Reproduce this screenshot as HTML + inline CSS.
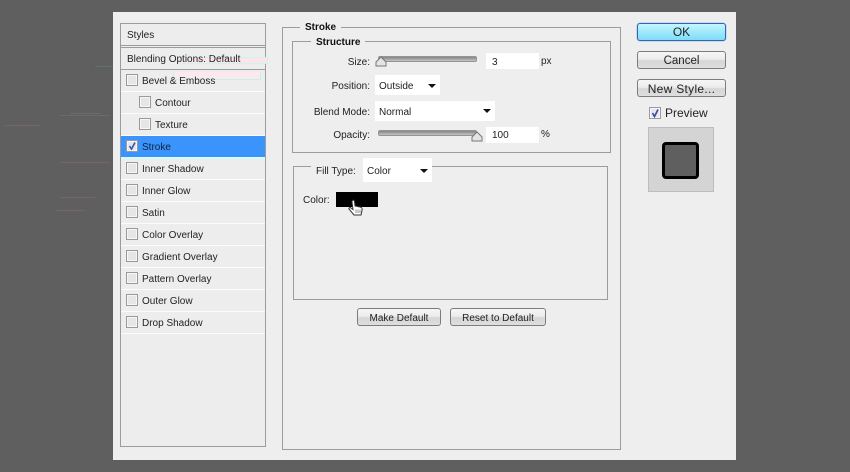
<!DOCTYPE html>
<html><head><meta charset="utf-8"><style>
html,body{margin:0;padding:0}
body{width:850px;height:472px;overflow:hidden;background:#5f5f5f;position:relative;font-family:"Liberation Sans",sans-serif;font-size:10px;color:#222}
div{position:absolute;box-sizing:border-box}
.t{white-space:nowrap;line-height:14px;height:14px;margin-top:1px}
.r{text-align:right}
.b{font-weight:bold;color:#111;background:#eee;padding:0 5px}
.g{border:1px solid #9c9c9c}
.sep{left:121px;width:144px;height:1px;background:#fcfcfc}
.cb{width:12px;height:12px;border:1px solid #9a9a9a;background:#e6e6e6;box-shadow:inset 0 0 0 1px #f6f6f6}
.inp{background:#fff;height:18px;padding-left:4px;white-space:nowrap}
.arr{width:0;height:0;border-left:4px solid transparent;border-right:4px solid transparent;border-top:4px solid #111}
.btn{border:1px solid #7c7c7c;border-radius:3px;background:linear-gradient(#f6f6f6 0,#ececec 45%,#d6d6d6 55%,#dedede 100%);text-align:center;white-space:nowrap}
.track{height:6px;border-radius:2px;background:linear-gradient(#848484,#c4c4c4);border:1px solid #959595}
.p{height:1px;background:#a8707f;opacity:.3}
.c{height:1px;background:#5f9c8c;opacity:.3}
</style></head><body>
<!-- faint artefacts on backdrop -->
<div class="p" style="left:5px;top:125px;width:35px"></div>
<div class="p" style="left:60px;top:115px;width:50px"></div>
<div class="c" style="left:70px;top:113px;width:30px"></div>
<div class="p" style="left:60px;top:162px;width:50px"></div>
<div class="p" style="left:60px;top:197px;width:35px"></div>
<div class="p" style="left:55px;top:210px;width:30px"></div>
<div class="c" style="left:95px;top:66px;width:18px"></div>

<div style="left:113px;top:12px;width:623px;height:448px;background:#eee"></div>

<!-- left panel -->
<div class="g" style="left:120px;top:23px;width:146px;height:424px;background:#ededed"></div>
<div style="left:121px;top:45px;width:144px;height:1px;background:#9c9c9c"></div>
<div style="left:121px;top:47px;width:144px;height:1px;background:#9c9c9c"></div>
<div style="left:121px;top:69px;width:144px;height:1px;background:#9c9c9c"></div>
<div class="t" style="left:127px;top:28px">Styles</div>
<div style="left:182px;top:57px;width:86px;height:7px;background:#fde4ea;border:1px solid #c9f5ee;border-left:0"></div>
<div style="left:173px;top:72px;width:88px;height:8px;background:#fde8ee;border:1px solid #bdf5ea;border-top:0"></div>
<div class="t" style="left:127px;top:52px">Blending Options: Default</div>

<div class="sep" style="top:91px"></div>
<div class="sep" style="top:113px"></div>
<div class="sep" style="top:135px"></div>
<div class="sep" style="top:179px"></div>
<div class="sep" style="top:201px"></div>
<div class="sep" style="top:223px"></div>
<div class="sep" style="top:245px"></div>
<div class="sep" style="top:267px"></div>
<div class="sep" style="top:289px"></div>
<div class="sep" style="top:311px"></div>
<div class="sep" style="top:333px"></div>
<div style="left:121px;top:136px;width:144px;height:21px;background:#3a94fb"></div>
<div style="left:121px;top:157px;width:144px;height:2px;background:#d8fdf8"></div>

<div class="cb" style="left:126px;top:74px"></div><div class="t" style="left:142px;top:74px">Bevel &amp; Emboss</div>
<div class="cb" style="left:139px;top:96px"></div><div class="t" style="left:155px;top:96px">Contour</div>
<div class="cb" style="left:139px;top:118px"></div><div class="t" style="left:155px;top:118px">Texture</div>
<div class="cb" style="left:126px;top:140px;background:#dfe6f5"></div>
<svg style="position:absolute;left:126px;top:140px" width="12" height="12"><path d="M3.500 6 L5.500 9 L9 2.500" fill="none" stroke="#3a4f9a" stroke-width="1.500"/></svg>
<div class="t" style="left:142px;top:140px;color:#10213f">Stroke</div>
<div class="cb" style="left:126px;top:162px"></div><div class="t" style="left:142px;top:162px">Inner Shadow</div>
<div class="cb" style="left:126px;top:184px"></div><div class="t" style="left:142px;top:184px">Inner Glow</div>
<div class="cb" style="left:126px;top:206px"></div><div class="t" style="left:142px;top:206px">Satin</div>
<div class="cb" style="left:126px;top:228px"></div><div class="t" style="left:142px;top:228px">Color Overlay</div>
<div class="cb" style="left:126px;top:250px"></div><div class="t" style="left:142px;top:250px">Gradient Overlay</div>
<div class="cb" style="left:126px;top:272px"></div><div class="t" style="left:142px;top:272px">Pattern Overlay</div>
<div class="cb" style="left:126px;top:294px"></div><div class="t" style="left:142px;top:294px">Outer Glow</div>
<div class="cb" style="left:126px;top:316px"></div><div class="t" style="left:142px;top:316px">Drop Shadow</div>

<!-- stroke group -->
<div class="g" style="left:282px;top:27px;width:339px;height:423px"></div>
<div class="t b" style="left:300px;top:20px">Stroke</div>
<div class="g" style="left:292px;top:41px;width:319px;height:112px"></div>
<div class="t b" style="left:311px;top:35px;height:13px">Structure</div>

<div class="t r" style="left:300px;top:55px;width:70px">Size:</div>
<div class="track" style="left:378px;top:56px;width:99px"></div>
<svg style="position:absolute;left:375px;top:56px" width="12" height="11"><path d="M1 10V6L6 1L11 6V10Z" fill="#e4e4e4" stroke="#777"/></svg>
<div class="inp" style="left:486px;top:53px;width:53px;height:16px;line-height:19px;padding-left:6px">3</div>
<div class="t" style="left:541px;top:54px">px</div>

<div class="t r" style="left:300px;top:79px;width:70px">Position:</div>
<div class="inp" style="left:375px;top:75px;width:65px;height:20px;line-height:24px">Outside</div>
<div class="arr" style="left:428px;top:84px"></div>

<div class="t r" style="left:290px;top:105px;width:80px">Blend Mode:</div>
<div class="inp" style="left:375px;top:101px;width:120px;height:20px;line-height:24px">Normal</div>
<div class="arr" style="left:483px;top:109px"></div>

<div class="t r" style="left:300px;top:128px;width:70px">Opacity:</div>
<div class="track" style="left:378px;top:130px;width:99px"></div>
<svg style="position:absolute;left:471px;top:131px" width="12" height="11"><path d="M1 10V6L6 1L11 6V10Z" fill="#e4e4e4" stroke="#777"/></svg>
<div class="inp" style="left:486px;top:127px;width:53px;height:16px;line-height:18px;padding-left:6px">100</div>
<div class="t" style="left:541px;top:127px">%</div>

<!-- fill type -->
<div class="g" style="left:293px;top:166px;width:315px;height:134px"></div>
<div style="left:311px;top:160px;width:121px;height:20px;background:#eee"></div>
<div class="t" style="left:316px;top:164px">Fill Type:</div>
<div class="inp" style="left:363px;top:158px;width:69px;height:24px;line-height:28px">Color</div>
<div class="arr" style="left:420px;top:169px"></div>
<div class="t" style="left:303px;top:193px">Color:</div>
<div style="left:336px;top:192px;width:42px;height:15px;background:#000"></div>
<svg style="position:absolute;left:347px;top:199px" width="18" height="18"><path d="M5.500 1.500C6.500 .7 7.500 1.500 7.500 2.500L8 7L13 8C15 8.500 15.500 9.500 15 11.500L14 16H7L2 10C1.500 9 3 8 4 9L6 10.500L5 3C4.900 2.300 5 1.900 5.500 1.500Z" fill="#fff" stroke="#333" stroke-width="1"/><path d="M9 10.500V14M11 10.500V14M13 10.500V14" stroke="#777" stroke-width=".8"/></svg>

<div class="btn" style="left:357px;top:308px;width:84px;height:18px;line-height:19px">Make Default</div>
<div class="btn" style="left:450px;top:308px;width:96px;height:18px;line-height:19px">Reset to Default</div>

<!-- right col -->
<div class="btn" style="left:637px;top:23px;width:89px;height:18px;line-height:16px;font-size:12px;border:1px solid #2f67b8;background:linear-gradient(#c6f5ff,#9fe9fc 50%,#7fdcf6);box-shadow:0 0 1px #2f67b8">OK</div>
<div class="btn" style="left:637px;top:51px;width:89px;height:18px;line-height:18px;font-size:11.500px">Cancel</div>
<div class="btn" style="left:637px;top:79px;width:89px;height:18px;line-height:18px;font-size:12px;letter-spacing:.3px">New Style...</div>
<div class="cb" style="left:649px;top:107px;background:#e2e6f6"></div>
<svg style="position:absolute;left:649px;top:107px" width="12" height="12"><path d="M3.500 6 L5.500 9.500 L9 2.500" fill="none" stroke="#3a4a9a" stroke-width="1.600"/></svg>
<div class="t" style="left:665px;top:106px;font-size:12px;margin-top:0">Preview</div>
<div style="left:648px;top:127px;width:66px;height:65px;background:#d4d4d4;border:1px solid #bdbdbd"></div>
<div style="left:662px;top:142px;width:37px;height:37px;background:#5f5f5f;border:3px solid #000;border-radius:4px"></div>
</body></html>
